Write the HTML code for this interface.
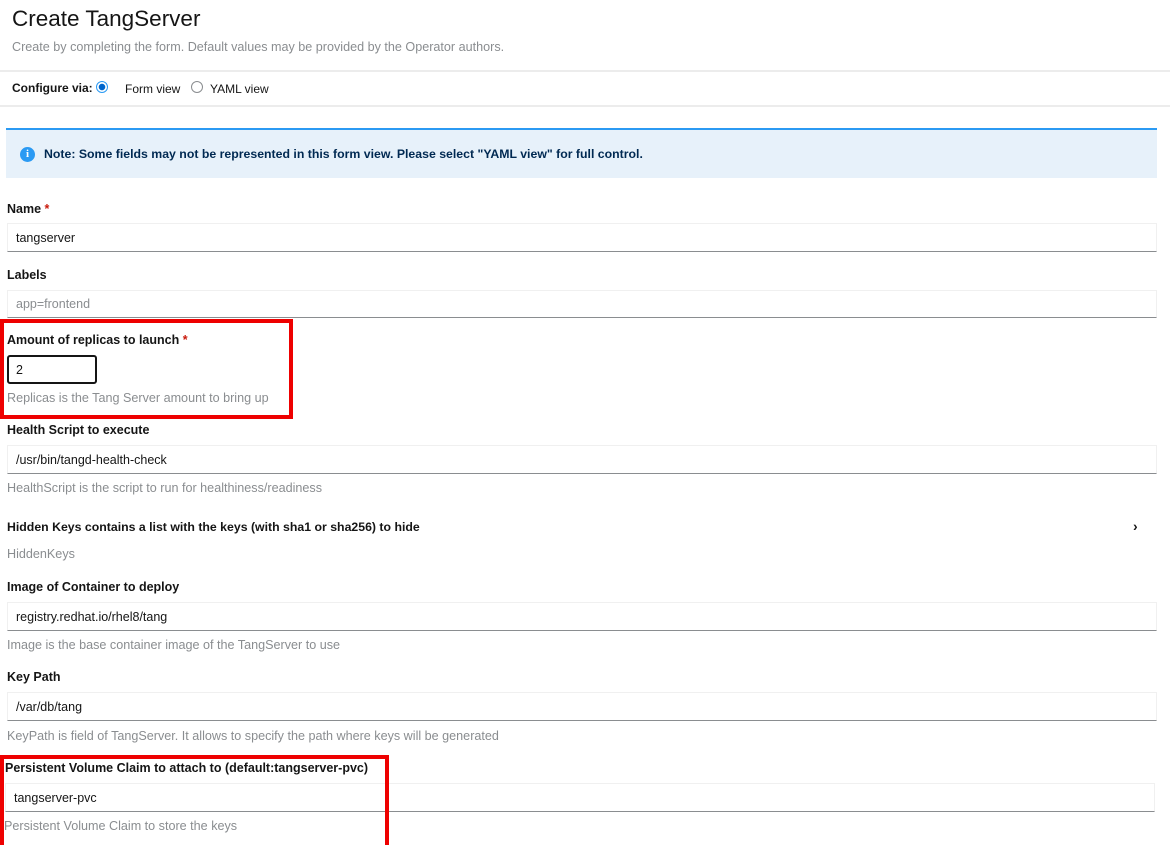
<!DOCTYPE html>
<html><head><style>
*{margin:0;padding:0;box-sizing:border-box}
html,body{width:1170px;height:845px;overflow:hidden}
body{background:#fff;font-family:"Liberation Sans",sans-serif;color:#151515;position:relative}
.a{position:absolute;white-space:nowrap}
.lbl{font-size:12.5px;font-weight:bold}
.help{font-size:12.6px;color:#8a8d90}
.inp{position:absolute;border:1px solid #f0f0f0;border-bottom:1px solid #8a8d90;font-size:12.5px;padding-left:8px;display:flex;align-items:center}
.req{color:#c9190b}
.red{position:absolute;border:4px solid #ee0000}
</style></head><body>
<div class="a" style="left:12px;top:6px;font-size:22.5px">Create TangServer</div>
<div class="a help" style="left:12px;top:40px;font-size:12.6px">Create by completing the form. Default values may be provided by the Operator authors.</div>
<div style="position:absolute;left:0;top:70px;width:1170px;height:2px;background:#ececec"></div>
<div class="a" style="left:12px;top:81px;font-size:12px;font-weight:bold">Configure via:</div>
<div class="a" style="left:96px;top:81px;width:12px;height:12px;border-radius:50%;border:1px solid #2b9af3;background:radial-gradient(#0066cc 3px,#fff 3.5px)"></div>
<div class="a" style="left:125px;top:82px;font-size:12px">Form view</div>
<div class="a" style="left:191px;top:81px;width:12px;height:12px;border-radius:50%;border:1px solid #8a8d90"></div>
<div class="a" style="left:210px;top:82px;font-size:12px">YAML view</div>
<div style="position:absolute;left:0;top:105px;width:1170px;height:2px;background:#ececec"></div>
<div style="position:absolute;left:6px;top:128px;width:1151px;height:50px;background:#e7f1fa;border-top:2px solid #2b9af3"></div>
<div class="a" style="left:20px;top:147px;width:15px;height:15px;border-radius:50%;background:#2b9af3;color:#fff;font-size:11px;font-weight:bold;text-align:center;line-height:15px;font-family:'Liberation Serif',serif">i</div>
<div class="a" style="left:44px;top:147px;font-size:12.3px;font-weight:bold;color:#002952">Note: Some fields may not be represented in this form view. Please select "YAML view" for full control.</div>

<div class="a lbl" style="left:7px;top:202px">Name <span class="req">*</span></div>
<div class="inp" style="left:7px;top:223px;width:1150px;height:29px">tangserver</div>
<div class="a lbl" style="left:7px;top:268px">Labels</div>
<div class="inp" style="left:7px;top:290px;width:1150px;height:28px;color:#8a8d90">app=frontend</div>

<div class="a lbl" style="left:7px;top:333px">Amount of replicas to launch <span class="req">*</span></div>
<div class="inp" style="left:7px;top:355px;width:90px;height:29px;border:2px solid #151515;border-radius:3px;padding-left:7px">2</div>
<div class="a help" style="left:7px;top:391px">Replicas is the Tang Server amount to bring up</div>
<div class="red" style="left:0;top:319px;width:293px;height:100px"></div>

<div class="a lbl" style="left:7px;top:423px">Health Script to execute</div>
<div class="inp" style="left:7px;top:445px;width:1150px;height:29px">/usr/bin/tangd-health-check</div>
<div class="a help" style="left:7px;top:481px">HealthScript is the script to run for healthiness/readiness</div>

<div class="a" style="left:7px;top:520px;font-size:12.3px;font-weight:bold">Hidden Keys contains a list with the keys (with sha1 or sha256) to hide</div>
<div class="a" style="left:1133px;top:518px;font-size:14px;font-weight:bold">›</div>
<div class="a help" style="left:7px;top:547px">HiddenKeys</div>

<div class="a lbl" style="left:7px;top:580px">Image of Container to deploy</div>
<div class="inp" style="left:7px;top:602px;width:1150px;height:29px">registry.redhat.io/rhel8/tang</div>
<div class="a help" style="left:7px;top:638px">Image is the base container image of the TangServer to use</div>

<div class="a lbl" style="left:7px;top:670px">Key Path</div>
<div class="inp" style="left:7px;top:692px;width:1150px;height:29px">/var/db/tang</div>
<div class="a help" style="left:7px;top:729px">KeyPath is field of TangServer. It allows to specify the path where keys will be generated</div>

<div class="a lbl" style="left:5px;top:761px">Persistent Volume Claim to attach to (default:tangserver-pvc)</div>
<div class="inp" style="left:5px;top:783px;width:1150px;height:29px">tangserver-pvc</div>
<div class="a help" style="left:4px;top:819px">Persistent Volume Claim to store the keys</div>
<div class="red" style="left:0;top:755px;width:389px;height:100px"></div>
</body></html>
